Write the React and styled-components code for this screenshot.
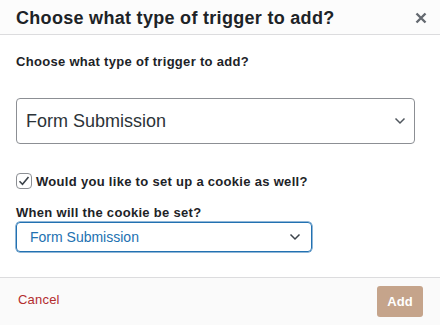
import React from "react";
import styled, { createGlobalStyle } from "styled-components";

const GlobalStyle = createGlobalStyle`
  html, body {
    margin: 0;
    padding: 0;
    background: #fff;
  }
  body {
    font-family: "Liberation Sans", Arial, sans-serif;
    color: #1e1e1e;
  }
`;

const Modal = styled.div`
  width: 440px;
  height: 325px;
  display: flex;
  flex-direction: column;
  background: #fff;
  box-sizing: border-box;
`;

const Header = styled.div`
  height: 35px;
  box-sizing: border-box;
  display: flex;
  align-items: center;
  justify-content: space-between;
  padding: 2px 12px 0 16px;
  background: #fcfcfc;
  border-bottom: 1px solid #dcdcde;
`;

const Title = styled.h1`
  margin: 0;
  font-size: 18px;
  font-weight: 700;
  letter-spacing: 0.3px;
  color: #1d2327;
`;

const Close = styled.button`
  border: 0;
  background: none;
  padding: 0;
  width: 14px;
  height: 14px;
  display: flex;
  align-items: center;
  justify-content: center;
  cursor: pointer;
`;

const Body = styled.div`
  flex: 1;
  padding: 19px 16px 0;
  display: flex;
  flex-direction: column;
`;

const Label = styled.div`
  font-size: 13px;
  font-weight: 700;
  letter-spacing: 0.3px;
  color: #1d2327;
  margin-bottom: ${({ gap }) => gap || 0}px;
`;

const SelectBox = styled.div`
  box-sizing: border-box;
  width: ${({ large }) => (large ? "399px" : "296px")};
  height: ${({ large }) => (large ? "46px" : "30px")};
  border: 1px solid ${({ active }) => (active ? "#2271b1" : "#8c8f94")};
  border-radius: 4px;
  box-shadow: ${({ active }) => (active ? "0 0 0 0.5px #2271b1" : "none")};
  display: flex;
  align-items: center;
  justify-content: space-between;
  padding: ${({ large }) => (large ? "0 8px 0 9px" : "0 10px 0 13px")};
  font-size: ${({ large }) => (large ? "18px" : "14px")};
  color: ${({ active }) => (active ? "#2271b1" : "#2c3338")};
  margin-bottom: ${({ gap }) => gap || 0}px;
`;

const CheckRow = styled.label`
  display: flex;
  align-items: center;
  gap: 4px;
  margin-bottom: 16px;
`;

const CheckBox = styled.span`
  box-sizing: border-box;
  width: 16px;
  height: 16px;
  border: 1px solid #8c8f94;
  border-radius: 4px;
  display: flex;
  align-items: center;
  justify-content: center;
  background: #fff;
`;

const Footer = styled.div`
  height: 48px;
  box-sizing: border-box;
  border-top: 1px solid #dcdcde;
  background: #fafafa;
  display: flex;
  align-items: center;
  justify-content: space-between;
  padding: 0 17px 0 18px;
`;

const Cancel = styled.a`
  font-size: 13px;
  letter-spacing: 0.2px;
  color: #b32d2e;
  text-decoration: none;
  margin-top: -4px;
`;

const AddButton = styled.button`
  width: 46px;
  height: 31px;
  border: 0;
  border-radius: 3px;
  background: #c5a48b;
  color: #fff;
  font-family: inherit;
  font-size: 13px;
  font-weight: 700;
  padding: 0;
`;

const Chevron = ({ color }) => (
  <svg width="12" height="8" viewBox="0 0 12 8" fill="none">
    <path d="M1.5 1.5 L6 6 L10.5 1.5" stroke={color} strokeWidth="1.5" />
  </svg>
);

export default function App() {
  return (
    <>
      <GlobalStyle />
      <Modal>
        <Header>
          <Title>Choose what type of trigger to add?</Title>
          <Close aria-label="Close">
            <svg width="12" height="12" viewBox="0 0 12 12">
              <path d="M1.5 1.5 L10.5 10.5 M10.5 1.5 L1.5 10.5" stroke="#646970" strokeWidth="2.4" />
            </svg>
          </Close>
        </Header>
        <Body>
          <Label gap={29}>Choose what type of trigger to add?</Label>
          <SelectBox large gap={29}>
            <span>Form Submission</span>
            <Chevron color="#50575e" />
          </SelectBox>
          <CheckRow>
            <CheckBox>
              <svg width="14" height="14" viewBox="0 0 14 14">
                <path d="M2.5 7.2 L5.5 10.2 L11.5 3" stroke="#3c434a" strokeWidth="1.6" fill="none" />
              </svg>
            </CheckBox>
            <Label>Would you like to set up a cookie as well?</Label>
          </CheckRow>
          <Label gap={2}>When will the cookie be set?</Label>
          <SelectBox active>
            <span>Form Submission</span>
            <Chevron color="#3c434a" />
          </SelectBox>
        </Body>
        <Footer>
          <Cancel href="#">Cancel</Cancel>
          <AddButton disabled>Add</AddButton>
        </Footer>
      </Modal>
    </>
  );
}
